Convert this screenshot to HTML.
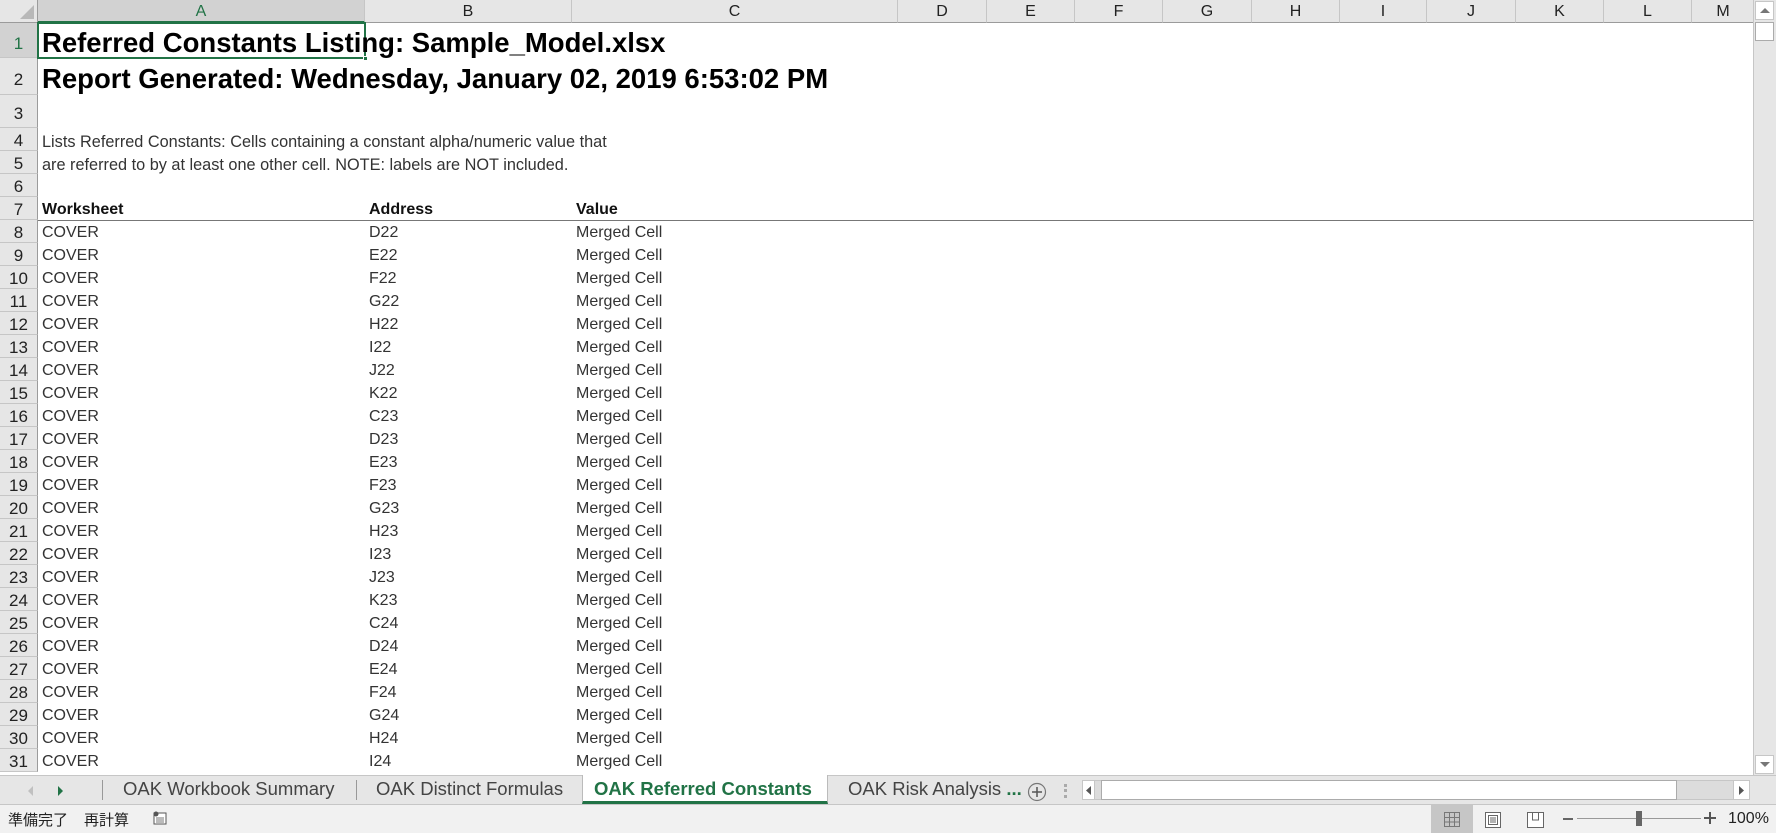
<!DOCTYPE html>
<html><head><meta charset="utf-8"><style>
*{margin:0;padding:0;box-sizing:border-box}
body{width:1776px;height:833px;overflow:hidden;background:#fff;font-family:"Liberation Sans",Arial,sans-serif;position:relative;color:#000}
.a{position:absolute;white-space:nowrap}
.ch{position:absolute;top:0;height:23px;background:#e6e6e6;border-right:1px solid #c6c6c6;border-bottom:1px solid #9b9b9b;font-size:16px;text-align:center;line-height:24px;color:#222}
.rh{position:absolute;left:0;width:38px;background:#e6e6e6;border-bottom:1px solid #c6c6c6;border-right:1px solid #9b9b9b;font-size:17px;text-align:center;color:#222}
.t{position:absolute;font-size:16px;white-space:nowrap;color:#111}
</style></head><body>
<div class="a" style="left:0;top:0;width:38px;height:23px;background:#e6e6e6;border-right:1px solid #9b9b9b;border-bottom:1px solid #9b9b9b"></div>
<svg class="a" style="left:20px;top:5px" width="15" height="15"><polygon points="14,0 14,14 0,14" fill="#b8b8b8"/></svg>
<div class="ch" style="left:38px;width:327px;background:#d2d2d2;color:#217346;border-bottom:2px solid #217346">A</div>
<div class="ch" style="left:365px;width:207px">B</div>
<div class="ch" style="left:572px;width:326px">C</div>
<div class="ch" style="left:898px;width:89px">D</div>
<div class="ch" style="left:987px;width:88px">E</div>
<div class="ch" style="left:1075px;width:88px">F</div>
<div class="ch" style="left:1163px;width:89px">G</div>
<div class="ch" style="left:1252px;width:88px">H</div>
<div class="ch" style="left:1340px;width:87px">I</div>
<div class="ch" style="left:1427px;width:89px">J</div>
<div class="ch" style="left:1516px;width:88px">K</div>
<div class="ch" style="left:1604px;width:88px">L</div>
<div class="ch" style="left:1692px;width:63px">M</div>
<div class="a" style="left:1753px;top:0;width:23px;height:775px;background:#e6e6e6;border-left:1px solid #c6c6c6"></div>
<div class="a" style="left:1755px;top:1px;width:19px;height:19px;background:#fff;border:1px solid #c6c6c6"></div>
<svg class="a" style="left:1760px;top:8px" width="10" height="6"><polygon points="5,0 10,5 0,5" fill="#777"/></svg>
<div class="a" style="left:1755px;top:22px;width:19px;height:19px;background:#fff;border:1px solid #ababab"></div>
<div class="a" style="left:1755px;top:755px;width:19px;height:19px;background:#fff;border:1px solid #c6c6c6"></div>
<svg class="a" style="left:1760px;top:762px" width="10" height="6"><polygon points="0,0 10,0 5,5" fill="#777"/></svg>
<div class="rh" style="top:23px;height:35px;line-height:42px;background:#d2d2d2;color:#217346">1</div>
<div class="rh" style="top:58px;height:37px;line-height:44px">2</div>
<div class="rh" style="top:95px;height:33px;line-height:38px">3</div>
<div class="rh" style="top:128px;height:23px;line-height:25px">4</div>
<div class="rh" style="top:151px;height:23px;line-height:25px">5</div>
<div class="rh" style="top:174px;height:23px;line-height:25px">6</div>
<div class="rh" style="top:197px;height:23px;line-height:25px">7</div>
<div id="rows"></div>
<div class="a" style="left:37px;top:22px;width:329px;height:37px;border:2px solid #217346"></div>
<div class="a" style="left:363px;top:56px;width:5px;height:5px;background:#217346;border:1px solid #fff"></div>
<div class="t" style="left:42px;top:27px;font-size:27.5px;font-weight:bold;color:#000">Referred Constants Listing: Sample_Model.xlsx</div>
<div class="t" style="left:42px;top:63px;font-size:27.5px;font-weight:bold;color:#000">Report Generated: Wednesday, January 02, 2019 6:53:02 PM</div>
<div class="t" style="left:42px;top:133px;color:#333;font-size:16.3px">Lists Referred Constants: Cells containing a constant alpha/numeric value that</div>
<div class="t" style="left:42px;top:156px;color:#333;font-size:16.3px">are referred to by at least one other cell. NOTE: labels are NOT included.</div>
<div class="t" style="left:42px;top:201px;font-weight:bold">Worksheet</div>
<div class="t" style="left:369px;top:201px;font-weight:bold">Address</div>
<div class="t" style="left:576px;top:201px;font-weight:bold">Value</div>
<div class="a" style="left:38px;top:220px;width:1715px;height:1px;background:#777"></div>
<div id="data"></div>
<div class="a" style="left:0;top:775px;width:1776px;height:30px;background:#e6e6e6;border-top:1px solid #c6c6c6;border-bottom:1px solid #c6c6c6"></div>
<svg class="a" style="left:28px;top:785px" width="40" height="12"><polygon points="5,1 5,11 0,6" fill="#c0c0c0"/><polygon points="30,1 30,11 35,6" fill="#217346"/></svg>
<div class="a" style="left:102px;top:780px;width:1px;height:20px;background:#999"></div>
<div class="t" style="left:123px;top:776px;font-size:18.5px;line-height:26px;color:#444">OAK Workbook Summary</div>
<div class="a" style="left:356px;top:780px;width:1px;height:20px;background:#999"></div>
<div class="t" style="left:376px;top:776px;font-size:18.5px;line-height:26px;color:#444">OAK Distinct Formulas</div>
<div class="a" style="left:582px;top:775px;width:246px;height:29px;background:#fff;border-bottom:3px solid #217346;border-right:1px solid #bbb;border-left:1px solid #bbb"></div>
<div class="t" style="left:594px;top:776px;font-size:18.5px;line-height:26px;font-weight:bold;color:#217346">OAK Referred Constants</div>
<div class="t" style="left:848px;top:776px;font-size:18.5px;line-height:26px;color:#444">OAK Risk Analysis <span style="color:#217346;font-weight:bold">...</span></div>
<svg class="a" style="left:1027px;top:782px" width="20" height="20"><circle cx="10" cy="10" r="8.5" fill="none" stroke="#777" stroke-width="1.2"/><path d="M5 10h10M10 5v10" stroke="#555" stroke-width="1.5"/></svg>
<div class="a" style="left:1064px;top:784px;width:3px;height:14px;border-left:3px dotted #aaa"></div>
<div class="a" style="left:1082px;top:780px;width:668px;height:20px;background:#dcdcdc;border:1px solid #c6c6c6"></div>
<div class="a" style="left:1082px;top:780px;width:13px;height:20px;background:#fff;border:1px solid #c6c6c6"></div>
<svg class="a" style="left:1086px;top:786px" width="5" height="9"><polygon points="5,0 5,9 0,4.5" fill="#555"/></svg>
<div class="a" style="left:1101px;top:780px;width:576px;height:20px;background:#fff;border:1px solid #ababab"></div>
<div class="a" style="left:1733px;top:780px;width:17px;height:20px;background:#fff;border:1px solid #c6c6c6"></div>
<svg class="a" style="left:1739px;top:786px" width="5" height="9"><polygon points="0,0 0,9 5,4.5" fill="#555"/></svg>
<div class="a" style="left:0;top:805px;width:1776px;height:28px;background:#f1f1f1"></div>
<div class="t" style="left:8px;top:809px;font-size:15px;font-family:'Liberation Sans','Noto Sans CJK JP',sans-serif;color:#222">準備完了</div>
<div class="t" style="left:84px;top:809px;font-size:15px;font-family:'Liberation Sans','Noto Sans CJK JP',sans-serif;color:#222">再計算</div>
<svg class="a" style="left:153px;top:811px" width="14" height="14"><rect x="1" y="2" width="12" height="11" fill="#fff" stroke="#555"/><circle cx="3" cy="3" r="2.5" fill="#555"/><path d="M3 7h8M3 9h8M3 11h8" stroke="#777"/></svg>
<div class="a" style="left:1431px;top:805px;width:42px;height:28px;background:#c6c6c6"></div>
<svg class="a" style="left:1444px;top:812px" width="16" height="15"><rect x="0.5" y="0.5" width="15" height="14" fill="none" stroke="#777"/><path d="M5.5 0v15M10.5 0v15M0 5.5h16M0 10h16" stroke="#777"/></svg>
<svg class="a" style="left:1485px;top:812px" width="16" height="16"><rect x="0.5" y="0.5" width="15" height="15" fill="#fff" stroke="#666"/><rect x="3.5" y="3.5" width="9" height="9" fill="none" stroke="#666"/><path d="M5 6h6M5 8h6M5 10h6" stroke="#666"/></svg>
<svg class="a" style="left:1527px;top:812px" width="17" height="16"><rect x="0.5" y="0.5" width="16" height="15" fill="#fff" stroke="#666"/><path d="M5.5 0v8h6V0" fill="none" stroke="#666"/></svg>
<div class="a" style="left:1563px;top:818px;width:10px;height:2px;background:#666"></div>
<div class="a" style="left:1577px;top:818px;width:124px;height:1px;background:#999"></div>
<div class="a" style="left:1636px;top:811px;width:6px;height:15px;background:#666"></div>
<svg class="a" style="left:1704px;top:812px" width="12" height="12"><path d="M0 6h12M6 0v12" stroke="#555" stroke-width="2"/></svg>
<div class="t" style="left:1728px;top:810px;font-size:16px;color:#222">100%</div>
<script>
var r=document.getElementById('rows'),d=document.getElementById('data'),h='',g='';
var addr=['D22','E22','F22','G22','H22','I22','J22','K22','C23','D23','E23','F23','G23','H23','I23','J23','K23','C24','D24','E24','F24','G24','H24','I24'];
for(var i=0;i<24;i++){var y=220+i*23;
h+='<div class="rh" style="top:'+y+'px;height:23px;line-height:25px">'+(8+i)+'</div>';
g+='<div class="t" style="left:42px;top:'+(y+4)+'px;color:#333">COVER</div><div class="t" style="left:369px;top:'+(y+4)+'px;color:#333">'+addr[i]+'</div><div class="t" style="left:576px;top:'+(y+4)+'px;color:#333">Merged Cell</div>';}
r.innerHTML=h;d.innerHTML=g;
</script>
</body></html>
